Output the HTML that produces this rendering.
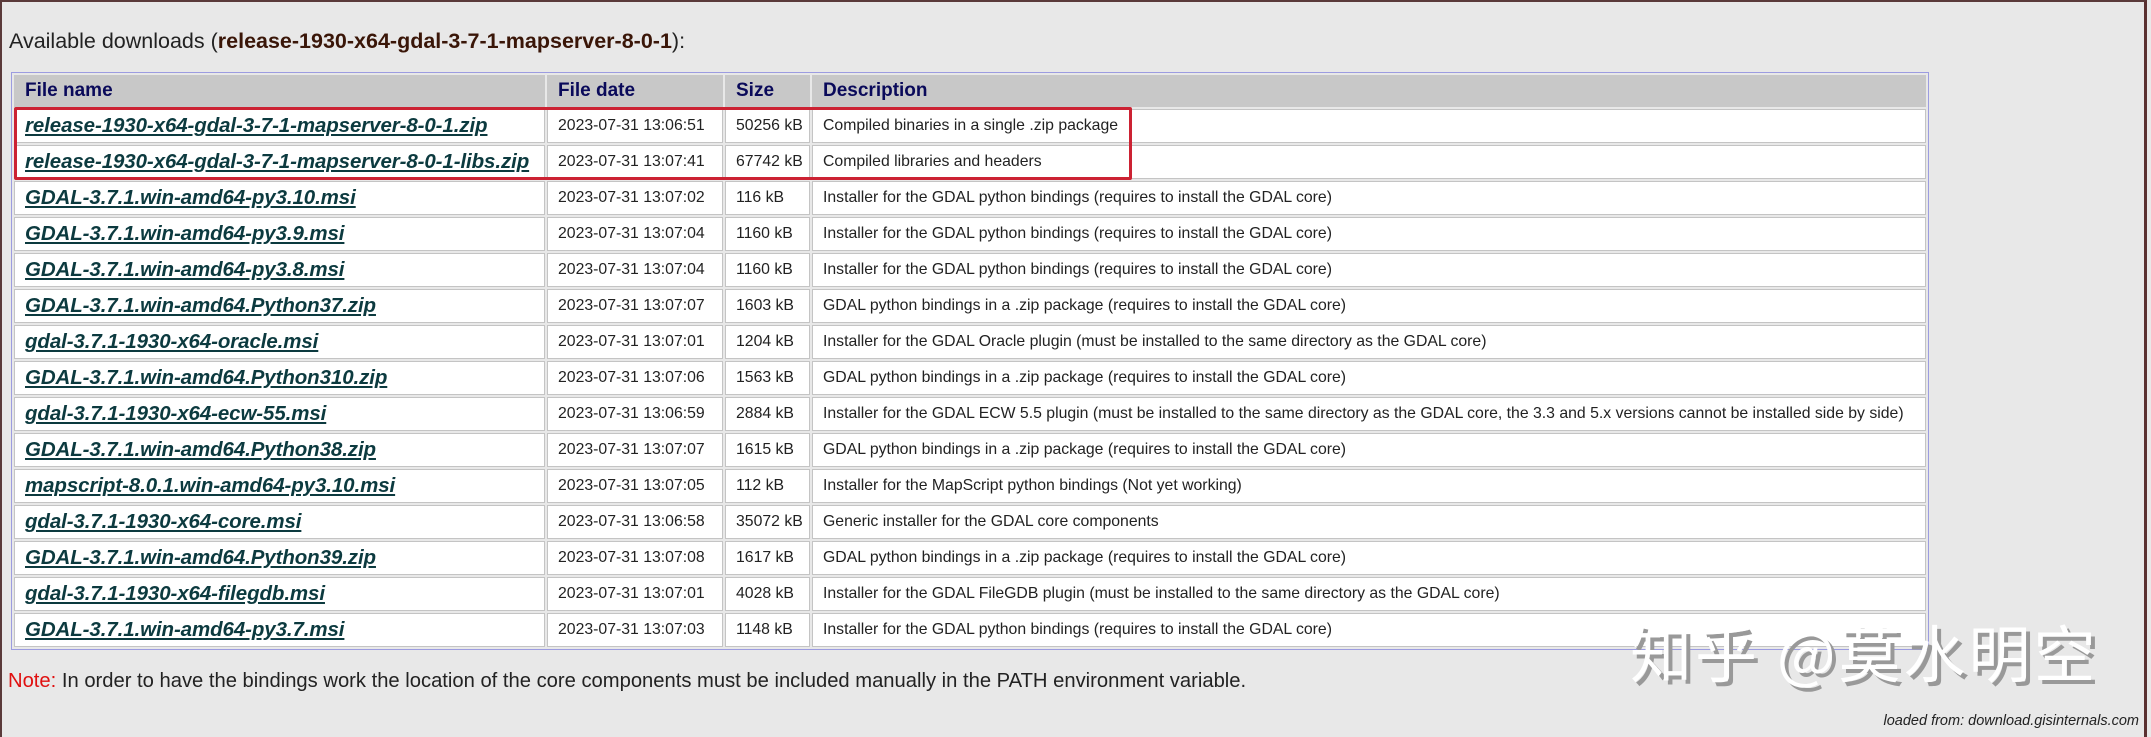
<!DOCTYPE html>
<html><head><meta charset="utf-8"><style>
body{margin:0;width:2151px;height:737px;background:#e8e8e8;position:relative;overflow:hidden;font-family:"Liberation Sans",sans-serif;}
.frame{position:absolute;left:0;top:0;width:2147px;height:737px;border-left:2px solid #5a3a3a;border-top:2px solid #5a3a3a;border-right:3px solid #5a3030;box-sizing:border-box;}
.title{position:absolute;left:9px;top:29px;font-size:21.5px;color:#222;}
.title b{color:#3a1608;}
table{position:absolute;left:11px;top:72px;width:1918px;border:1.5px solid #9c9ce0;border-spacing:2px;table-layout:fixed;background:#e8e8e8;}
th{background:#c8c8c8;color:#0a0a5a;font-size:19px;text-align:left;padding:0 0 0 10px;height:30px;border:1px solid #c8c8c8;}
td{background:#fff;border:1px solid #c4c4c4;height:32px;padding:0 0 0 10px;font-size:15.8px;color:#222;white-space:nowrap;overflow:hidden;}
td.f{font-size:20.5px;}
td.f a{color:#0c3a3f;font-weight:bold;font-style:italic;text-decoration:underline;letter-spacing:-0.1px;}
.red{position:absolute;left:14px;top:107px;width:1118px;height:73px;border:3px solid #cc2233;box-sizing:border-box;border-radius:2px;}
.note{position:absolute;left:8px;top:670px;font-size:20.2px;color:#222;}
.note span{color:#e01010;}
.loaded{position:absolute;right:12px;top:713px;font-size:14.5px;font-style:italic;color:#222;}
.wm{position:absolute;left:1630px;top:605px;font-size:62px;color:#fff;font-family:"Noto Sans CJK SC",sans-serif;text-shadow:4px 4px 0 #999;letter-spacing:3px;}
</style></head><body>
<div class="frame"></div>
<div class="title">Available downloads (<b>release-1930-x64-gdal-3-7-1-mapserver-8-0-1</b>):</div>
<table>
<colgroup><col style="width:531px"><col style="width:176px"><col style="width:85px"><col></colgroup>
<tr><th>File name</th><th>File date</th><th>Size</th><th>Description</th></tr>
<tr><td class="f"><a>release-1930-x64-gdal-3-7-1-mapserver-8-0-1.zip</a></td><td>2023-07-31 13:06:51</td><td>50256 kB</td><td>Compiled binaries in a single .zip package</td></tr>
<tr><td class="f"><a>release-1930-x64-gdal-3-7-1-mapserver-8-0-1-libs.zip</a></td><td>2023-07-31 13:07:41</td><td>67742 kB</td><td>Compiled libraries and headers</td></tr>
<tr><td class="f"><a>GDAL-3.7.1.win-amd64-py3.10.msi</a></td><td>2023-07-31 13:07:02</td><td>116 kB</td><td>Installer for the GDAL python bindings (requires to install the GDAL core)</td></tr>
<tr><td class="f"><a>GDAL-3.7.1.win-amd64-py3.9.msi</a></td><td>2023-07-31 13:07:04</td><td>1160 kB</td><td>Installer for the GDAL python bindings (requires to install the GDAL core)</td></tr>
<tr><td class="f"><a>GDAL-3.7.1.win-amd64-py3.8.msi</a></td><td>2023-07-31 13:07:04</td><td>1160 kB</td><td>Installer for the GDAL python bindings (requires to install the GDAL core)</td></tr>
<tr><td class="f"><a>GDAL-3.7.1.win-amd64.Python37.zip</a></td><td>2023-07-31 13:07:07</td><td>1603 kB</td><td>GDAL python bindings in a .zip package (requires to install the GDAL core)</td></tr>
<tr><td class="f"><a>gdal-3.7.1-1930-x64-oracle.msi</a></td><td>2023-07-31 13:07:01</td><td>1204 kB</td><td>Installer for the GDAL Oracle plugin (must be installed to the same directory as the GDAL core)</td></tr>
<tr><td class="f"><a>GDAL-3.7.1.win-amd64.Python310.zip</a></td><td>2023-07-31 13:07:06</td><td>1563 kB</td><td>GDAL python bindings in a .zip package (requires to install the GDAL core)</td></tr>
<tr><td class="f"><a>gdal-3.7.1-1930-x64-ecw-55.msi</a></td><td>2023-07-31 13:06:59</td><td>2884 kB</td><td>Installer for the GDAL ECW 5.5 plugin (must be installed to the same directory as the GDAL core, the 3.3 and 5.x versions cannot be installed side by side)</td></tr>
<tr><td class="f"><a>GDAL-3.7.1.win-amd64.Python38.zip</a></td><td>2023-07-31 13:07:07</td><td>1615 kB</td><td>GDAL python bindings in a .zip package (requires to install the GDAL core)</td></tr>
<tr><td class="f"><a>mapscript-8.0.1.win-amd64-py3.10.msi</a></td><td>2023-07-31 13:07:05</td><td>112 kB</td><td>Installer for the MapScript python bindings (Not yet working)</td></tr>
<tr><td class="f"><a>gdal-3.7.1-1930-x64-core.msi</a></td><td>2023-07-31 13:06:58</td><td>35072 kB</td><td>Generic installer for the GDAL core components</td></tr>
<tr><td class="f"><a>GDAL-3.7.1.win-amd64.Python39.zip</a></td><td>2023-07-31 13:07:08</td><td>1617 kB</td><td>GDAL python bindings in a .zip package (requires to install the GDAL core)</td></tr>
<tr><td class="f"><a>gdal-3.7.1-1930-x64-filegdb.msi</a></td><td>2023-07-31 13:07:01</td><td>4028 kB</td><td>Installer for the GDAL FileGDB plugin (must be installed to the same directory as the GDAL core)</td></tr>
<tr><td class="f"><a>GDAL-3.7.1.win-amd64-py3.7.msi</a></td><td>2023-07-31 13:07:03</td><td>1148 kB</td><td>Installer for the GDAL python bindings (requires to install the GDAL core)</td></tr>
</table>
<div class="red"></div>
<div class="wm">知乎 @莫水明空</div>
<div class="note"><span>Note:</span> In order to have the bindings work the location of the core components must be included manually in the PATH environment variable.</div>
<div class="loaded">loaded from: download.gisinternals.com</div>
</body></html>
